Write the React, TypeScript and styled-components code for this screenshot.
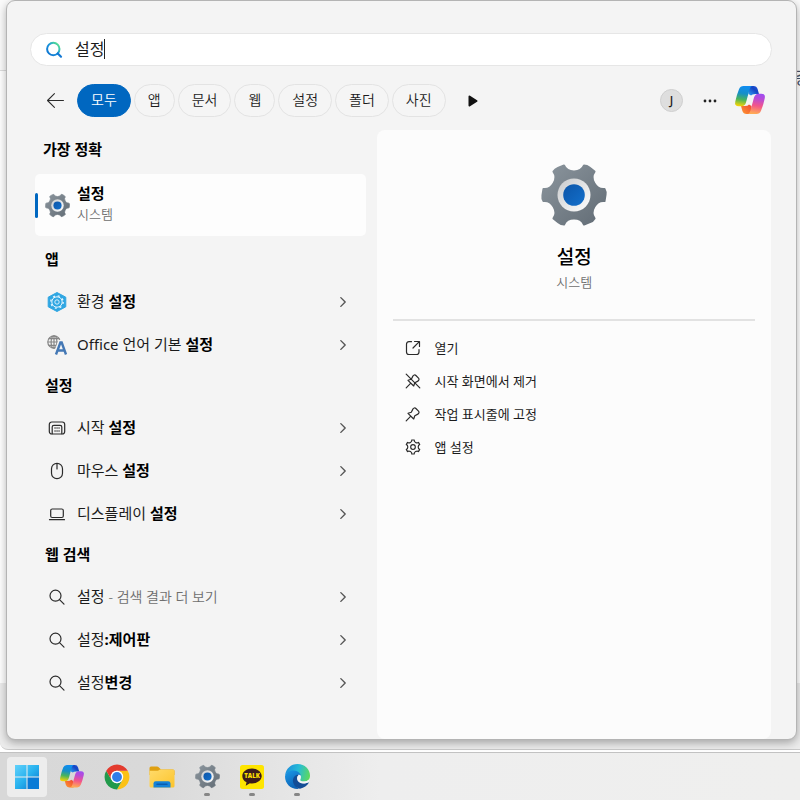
import React, { useId, useState } from "react";
import styled, { createGlobalStyle } from "styled-components";

const GlobalStyle = createGlobalStyle`
  * { box-sizing: border-box; }
  body { margin: 0; background: #ffffff; }
  body, button, input {
    font-family: "Noto Sans", "Noto Sans CJK KR", sans-serif;
    color: #1b1b1b;
  }
  button { border: 0; padding: 0; background: none; text-align: left; cursor: pointer; }
  svg { display: block; flex: none; overflow: visible; }
`;

const Desktop = styled.div`
  display: flex;
  flex-direction: column;
  min-height: 100vh;
  position: relative;
  overflow: hidden;
`;

const Backdrop = styled.div`
  position: absolute;
  inset: 0 0 50px;
  border-bottom: 1px solid #c9c9c9;
  border-radius: 0 0 0 8px;
  background: linear-gradient(#fafafa 0 70px, #dddddd 70px 71px, #ffffff 71px 683px, #ececec 683px);
`;

const BackdropText = styled.span`
  position: absolute;
  top: 68px;
  left: calc(100% - 5px);
  font-size: 16px;
  line-height: 20px;
  color: #44546a;
`;

const PanelArea = styled.div`
  flex: 1;
  display: flex;
  padding: 0 3px 12px 6px;
  position: relative;
`;

const Panel = styled.main`
  flex: 1;
  min-width: 0;
  display: flex;
  flex-direction: column;
  padding: 32px 24px 0 23px;
  border: 1px solid #b4b4b4;
  border-radius: 9px;
  background: #f4f4f4;
  box-shadow: 0 3px 9px rgba(0, 0, 0, 0.3);
`;

const SearchBox = styled.label`
  display: flex;
  align-items: center;
  height: 33px;
  padding: 0 16px 2px 15px;
  border: 1px solid #e6e6e6;
  border-radius: 17px;
  background: #ffffff;
`;

const SearchInput = styled.input`
  field-sizing: content;
  min-width: 2px;
  max-width: 90%;
  height: 24px;
  margin-left: 13px;
  padding: 0;
  border: 0;
  outline: 0;
  background: transparent;
  font-size: 16px;
  line-height: 24px;
  caret-color: transparent;
`;

const Caret = styled.span`
  width: 1px;
  height: 20px;
  background: #222222;
`;

const Nav = styled.nav`
  display: flex;
  align-items: center;
  gap: 3px;
  height: 33px;
  margin: 18px 0 13px;
  padding: 0 7px 0 17px;
`;

const IconButton = styled.button<{ $size?: number; $before?: number; $after?: number }>`
  display: flex;
  align-items: center;
  justify-content: center;
  flex: none;
  width: ${(p) => p.$size ?? 20}px;
  height: 32px;
  margin-left: ${(p) => p.$before ?? 0}px;
  margin-right: ${(p) => p.$after ?? 0}px;
`;

const Chip = styled.button<{ $active?: boolean }>`
  height: 33px;
  padding: 0 13px 2px;
  border: 1px solid ${(p) => (p.$active ? "#0067c0" : "#e3e3e3")};
  border-radius: 17px;
  background: ${(p) => (p.$active ? "#0067c0" : "#f5f5f5")};
  color: ${(p) => (p.$active ? "#ffffff" : "#1b1b1b")};
  font-size: 14px;
  font-weight: 350;
  line-height: 20px;
  white-space: nowrap;
`;

const Spacer = styled.div`
  flex: 1;
`;

const Avatar = styled.button`
  width: 23px;
  height: 23px;
  border: 1px solid #cfcfcf;
  border-radius: 50%;
  background: #dedede;
  font-size: 12px;
  font-weight: 500;
  line-height: 20px;
  text-align: center;
`;

const Body = styled.div`
  flex: 1;
  display: grid;
  grid-template-columns: minmax(0, 331fr) minmax(0, 393fr);
  gap: 11px;
  margin: 0 1px 0 5px;
`;

const Results = styled.div`
  padding-bottom: 32px;
`;

const Heading = styled.h2<{ $lead?: boolean }>`
  height: 40px;
  margin: 0;
  padding-left: ${(p) => (p.$lead ? 8 : 10)}px;
  font-size: 15px;
  font-weight: 700;
  line-height: 38px;
  color: #000000;
`;

const BestMatch = styled.button`
  display: flex;
  align-items: center;
  width: 100%;
  height: 62px;
  margin: 4px 0;
  border-radius: 5px;
  background: #fdfdfd;

  &::before {
    content: "";
    width: 3px;
    height: 25px;
    margin-right: 7px;
    border-radius: 2px;
    background: #0067c0;
  }
`;

const BestText = styled.span`
  display: flex;
  flex-direction: column;
  margin-left: 7px;
  padding-bottom: 3px;
`;

const Strong = styled.strong`
  font-size: 15px;
  font-weight: 700;
  line-height: 21px;
  color: #000000;
`;

const Muted = styled.span<{ $size?: number }>`
  font-size: ${(p) => p.$size ?? 13}px;
  font-weight: 350;
  line-height: 20px;
  color: #6e6e6e;
`;

const Row = styled.button`
  display: flex;
  align-items: center;
  width: 100%;
  height: 43px;
  padding: 0 16px 0 12px;
  font-size: 15px;
  line-height: 22px;
`;

const RowIcon = styled.span`
  display: flex;
  justify-content: center;
  width: 20px;
  margin-right: 10px;
`;

const RowText = styled.span`
  flex: 1;
  padding-bottom: 1px;
  white-space: pre;

  b { font-weight: 700; color: #000000; }
`;

const Preview = styled.section`
  display: flex;
  flex-direction: column;
  align-items: center;
  padding: 32px 16px;
  border-radius: 8px;
  background: #fcfcfc;
`;

const Title = styled.h1`
  margin: 14px 0 0;
  font-size: 19px;
  font-weight: 500;
  line-height: 30px;
  color: #000000;
`;

const Rule = styled.hr`
  width: 100%;
  height: 2px;
  margin: 27px 0 10px;
  border: 0;
  background: #e2e2e2;
`;

const Action = styled.button`
  display: flex;
  align-items: center;
  gap: 13px;
  width: 100%;
  height: 33px;
  padding-left: 12px;
  font-size: 13px;
  line-height: 20px;
`;

const Taskbar = styled.footer`
  display: flex;
  align-items: center;
  gap: 5px;
  height: 48px;
  padding: 0 7px;
  position: relative;
  border-top: 1px solid #c2c2c2;
  background: linear-gradient(90deg, #d8d8d8 0, #d9d9d9 150px, #eeeeee 380px, #efefee);
`;

const TaskButton = styled.button<{ $active?: boolean; $running?: boolean }>`
  display: grid;
  place-items: center;
  position: relative;
  width: 40px;
  height: 40px;
  border-radius: 4px;
  background: ${(p) => (p.$active ? "#ededed" : "transparent")};

  &::after {
    content: "";
    display: ${(p) => (p.$running ? "block" : "none")};
    position: absolute;
    bottom: 1px;
    left: 17px;
    width: 6px;
    height: 3px;
    border-radius: 2px;
    background: #868686;
  }
`;

/* ---------- icons ---------- */

const turn = (x: number, y: number, deg: number) => {
  const a = (deg * Math.PI) / 180;
  const px = x * Math.cos(a) - y * Math.sin(a);
  const py = x * Math.sin(a) + y * Math.cos(a);
  return `${px.toFixed(2)} ${py.toFixed(2)}`;
};

const gearPath =
  [0, 60, 120, 180, 240, 300]
    .map((d, i) => {
      const p = (x: number, y: number) => turn(x, y, d);
      return `${i ? "L" : "M"}${p(-10, -29.5)}Q${p(-7.5, -23.5)} ${p(0, -23.5)}Q${p(7.5, -23.5)} ${p(10, -29.5)}Q${p(13, -29.5)} ${p(15.5, -27.5)}`;
    })
    .join("") + "Z";

function SettingsGear({ size }: { size: number }) {
  const id = useId();
  return (
    <svg width={size} height={size} viewBox="-33 -33 66 66" aria-hidden="true">
      <defs>
        <linearGradient id={id + "a"} x1="0" y1="0" x2="1" y2="1">
          <stop offset="0" stopColor="#8b959d" />
          <stop offset="1" stopColor="#626c75" />
        </linearGradient>
        <linearGradient id={id + "b"} x1="0" y1="0" x2="1" y2="1">
          <stop offset="0" stopColor="#c8cacc" />
          <stop offset="1" stopColor="#ffffff" />
        </linearGradient>
        <linearGradient id={id + "c"} x1="0" y1="0" x2="1" y2="1">
          <stop offset="0" stopColor="#0c55a8" />
          <stop offset="1" stopColor="#1370cc" />
        </linearGradient>
      </defs>
      <path d={gearPath} fill={`url(#${id}a)`} stroke={`url(#${id}a)`} strokeWidth="2" strokeLinejoin="round" />
      <circle r="16.5" fill={`url(#${id}b)`} />
      <circle r="10.8" fill={`url(#${id}c)`} />
    </svg>
  );
}

function Copilot({ size }: { size: number }) {
  const id = useId();
  const ribbon = "M8.5 0H17Q15.4 .6 14.6 3.2L11 16.5Q9.8 20.3 6.5 20.3H3.8Q-.8 20.3 .3 15.5Q1.8 8.5 4 3.2Q5.3 0 8.5 0Z";
  const fold = "M13 0H18.6Q21.6 0 22.6 3L24 8H20.5Q17 8 16 9.5L13.5 8Z";
  return (
    <svg width={size} height={size} viewBox="0 0 30 30" aria-hidden="true">
      <defs>
        <linearGradient id={id + "a"} x1=".4" y1="0" x2=".25" y2="1">
          <stop offset="0" stopColor="#0f8df0" />
          <stop offset=".35" stopColor="#168fc8" />
          <stop offset=".65" stopColor="#49b45c" />
          <stop offset="1" stopColor="#ffd500" />
        </linearGradient>
        <linearGradient id={id + "b"} x1=".35" y1="1" x2=".5" y2="0">
          <stop offset="0" stopColor="#9f4df0" />
          <stop offset=".25" stopColor="#b94bd6" />
          <stop offset=".6" stopColor="#f3568a" />
          <stop offset="1" stopColor="#ffab55" />
        </linearGradient>
        <linearGradient id={id + "c"} x1="0" y1="1" x2="1" y2="0">
          <stop offset="0" stopColor="#2fa5f5" />
          <stop offset=".6" stopColor="#1545c4" />
          <stop offset="1" stopColor="#2458dc" />
        </linearGradient>
        <linearGradient id={id + "d"} x1="1" y1="0" x2="0" y2="1">
          <stop offset="0" stopColor="#ff9a2e" />
          <stop offset="1" stopColor="#ef4436" />
        </linearGradient>
      </defs>
      <path d={fold} fill={`url(#${id}c)`} />
      <g transform="rotate(180 15 14)">
        <path d={fold} fill={`url(#${id}d)`} />
        <path d={ribbon} fill={`url(#${id}b)`} />
      </g>
      <path d={ribbon} fill={`url(#${id}a)`} />
    </svg>
  );
}

function Chrome() {
  const wedge = "M24 13H43.05A22 22 0 0 0 4.95 13L14.47 29.5A11 11 0 0 1 24 13Z";
  return (
    <svg width="26" height="26" viewBox="1 1 46 46" aria-hidden="true">
      <path d={wedge} fill="#fbc116" transform="rotate(120 24 24)" />
      <path d={wedge} fill="#229a4b" transform="rotate(-120 24 24)" />
      <path d={wedge} fill="#e33b2e" />
      <circle cx="24" cy="24" r="11" fill="#ffffff" />
      <circle cx="24" cy="24" r="8.7" fill="#2f7de9" />
    </svg>
  );
}

function Folder() {
  return (
    <svg width="26" height="24" viewBox="0 0 26 24" aria-hidden="true">
      <defs>
        <linearGradient id="folderFront" x1="0" y1="0" x2="1" y2="1">
          <stop offset="0" stopColor="#ffdb6b" />
          <stop offset="1" stopColor="#fcc42c" />
        </linearGradient>
      </defs>
      <path d="M.5 3Q.5 1.5 2 1.5H8Q9 1.5 9.7 2.2L12 4.5H24Q25.5 4.5 25.5 6V10H.5Z" fill="#dfa011" />
      <path d="M.5 5.8H8.5Q9.5 5.8 10.2 5.1L11 4.5H24Q25.5 4.5 25.5 6V21Q25.5 22.5 24 22.5H2Q.5 22.5 .5 21Z" fill="url(#folderFront)" />
      <path d="M4.5 22.5V18.5Q4.5 16.3 6.7 16.3H19.3Q21.5 16.3 21.5 18.5V22.5Z" fill="#1683d8" />
      <path d="M8 19.2H18" stroke="#0b5cae" strokeWidth="1.5" strokeLinecap="round" />
    </svg>
  );
}

const TalkText = styled.text`
  font: 900 6px "Open Sans", sans-serif;
  fill: #ffe000;
`;

function KakaoTalk() {
  return (
    <svg width="24" height="24" viewBox="0 0 24 24" aria-hidden="true">
      <rect width="24" height="24" rx="2.5" fill="#fee500" />
      <path d="M12 3.5C6.5 3.5 2.3 6.9 2.3 11C2.3 13.7 4 16 6.5 17.3L5.7 20.7L9.9 18.2Q11 18.4 12 18.4C17.5 18.4 21.7 15.1 21.7 11C21.7 6.9 17.5 3.5 12 3.5Z" fill="#3b1c1c" />
      <TalkText x="12" y="13" textAnchor="middle">TALK</TalkText>
    </svg>
  );
}

function Edge() {
  return (
    <svg width="25" height="25" viewBox="0 0 25 25" aria-hidden="true">
      <defs>
        <linearGradient id="edgeTop" x1="0" y1=".4" x2="1" y2=".6">
          <stop offset="0" stopColor="#1c8fdc" />
          <stop offset=".5" stopColor="#27bcd6" />
          <stop offset="1" stopColor="#5ed95c" />
        </linearGradient>
        <linearGradient id="edgeBody" x1="0" y1="0" x2=".5" y2="1">
          <stop offset="0" stopColor="#1b9ae8" />
          <stop offset="1" stopColor="#0d61b4" />
        </linearGradient>
      </defs>
      <path d="M.1 11.5C.8 4.5 6 0 12.5 0C20 0 25 5.5 25 11.5C25 15.5 22.5 17.5 19 17.5C16 17.5 14.5 16.6 15.3 15.2C17.5 11.5 13 6.5 8 7.2C4 7.5 1.2 9.5 .1 11.5Z" fill="url(#edgeTop)" />
      <path d="M0 12.5C.4 8.6 4.5 6.3 8.5 6.4C13 6.5 16.2 9.8 16 12.2C14.5 9.8 11.5 10.5 10.3 13.5C9 18 11 24 14 24.9Q13.2 25 12.5 25C5.5 25 0 19.5 0 12.5Z" fill="url(#edgeBody)" />
      <path d="M12.2 10.8C8.5 12.2 7 15.7 8.5 19.5C9.8 22.7 12.5 24.7 15 24.7C19 24 22.3 21.5 23.8 18.8C24 18.3 23.6 18.2 23 18.5C18 20.8 12.5 19 12.2 14.8C12.1 13 12.7 11.8 13.5 11.2Z" fill="#134d96" />
      <path d="M12.2 14.8C12 12 13.6 10.8 15.6 11.6Q16.2 13.2 15.3 15.2C14.5 16.6 16 17.5 19 17.5Q22 17.5 24 15.8Q24.400 17 23.800 18.300Q21 19.800 18 19.300C14.500 19 12.400 17.200 12.200 14.800Z" fill="#f2f5f7" />
    </svg>
  );
}

function WindowsLogo() {
  return (
    <svg width="24" height="24" viewBox="0 0 24 24" aria-hidden="true">
      <defs>
        <linearGradient id="winPane" gradientUnits="userSpaceOnUse" x1="0" y1="0" x2="24" y2="24">
          <stop offset="0" stopColor="#62d2fb" />
          <stop offset=".5" stopColor="#27b1ee" />
          <stop offset="1" stopColor="#0670cc" />
        </linearGradient>
      </defs>
      <path d="M0 0H11.5V11.5H0ZM12.5 0H24V11.5H12.5ZM0 12.5H11.5V24H0Z" fill="url(#winPane)" />
      <path d="M12.5 12.5H24V24H12.5Z" fill="#0a7bd6" />
    </svg>
  );
}

function HexGear() {
  return (
    <svg width="20" height="20" viewBox="0 0 20 20" aria-hidden="true">
      <path d="M10 .5L18.8 5.2V14.8L10 19.5L1.2 14.8V5.2Z" fill="#2fa6e2" stroke="#2fa6e2" strokeLinejoin="round" />
      <g fill="none" stroke="#e6f6ff">
        <circle cx="10" cy="10" r="5.2" strokeWidth="1" />
        <circle cx="10" cy="10" r="6.2" strokeWidth="1.3" strokeDasharray="2 2.87" />
        <circle cx="10" cy="10" r="2.2" strokeWidth=".9" />
      </g>
    </svg>
  );
}

function OfficeLanguage() {
  return (
    <svg width="20" height="20" viewBox="0 0 20 20" aria-hidden="true">
      <g fill="none" stroke="#858585" strokeWidth="1.2">
        <circle cx="7" cy="7" r="6.2" />
        <ellipse cx="7" cy="7" rx="2.9" ry="6.2" />
        <path d="M7 .8V13.2M.8 7H13.2M1.7 3.7H12.3M1.7 10.3H12.3" />
      </g>
      <path d="M8.3 19.5L12.8 7H15.2L19.5 19.5M10.3 15.5H17.8" fill="none" stroke="#f4f4f4" strokeWidth="4" />
      <path d="M9 19.5L13.4 7.5H14.7L19 19.5M10.8 15.5H17.3" fill="none" stroke="#4478b5" strokeWidth="2.4" />
    </svg>
  );
}

type LineName = "start" | "mouse" | "display" | "search" | "open" | "unpin" | "pin" | "gear" | "chevron" | "back";

const pin = "M7.9 3.1C8.5 1.9 10 1.6 10.9 2.5L13.5 5.1C14.4 6 14.1 7.5 12.9 8.1L9.8 9.7L8.7 13L3 7.3L6.3 6.2ZM5.8 10.2L1.2 14.8";

const smallGear =
  [30, 90, 150, 210, 270, 330]
    .map((d, i) => {
      const p = (x: number, y: number) => turn(x, y, d);
      return `${i ? "L" : "M"}${p(-2.4, -6.7)}Q${p(-2, -5.2)} ${p(0, -5.2)}Q${p(2, -5.2)} ${p(2.4, -6.7)}`;
    })
    .join("") + "Z";

function LineIcon({ name, size = 16 }: { name: LineName; size?: number }) {
  return (
    <svg width={size} height={size} viewBox="0 0 16 16" fill="none" stroke="#2b2b2b" strokeWidth="1.2" strokeLinecap="round" strokeLinejoin="round" aria-hidden="true">
      {name === "start" && (
        <>
          <rect x=".3" y="2" width="15.4" height="12" rx="2.5" />
          <path d="M3.2 13.7V7Q3.2 5.3 4.9 5.3H11.1Q12.8 5.3 12.8 7V13.7" />
          <path d="M6 8H6.1M8 8H8.1M10 8H10.1M6 11H6.1M8 11H8.1M10 11H10.1" strokeWidth="1.4" />
        </>
      )}
      {name === "mouse" && (
        <>
          <rect x="2.5" y=".3" width="11" height="15.4" rx="5.5" />
          <path d="M8 .5V6" />
        </>
      )}
      {name === "display" && (
        <>
          <rect x="1.7" y="3" width="12.6" height="8.5" rx="1.5" />
          <path d="M.5 13.7H15.5" />
        </>
      )}
      {name === "search" && (
        <>
          <circle cx="6.5" cy="6.7" r="5.5" />
          <path d="M10.5 10.7L15 15.2" />
        </>
      )}
      {name === "open" && (
        <>
          <path d="M6.5 1.7H4Q1.5 1.7 1.5 4.2V12Q1.5 14.5 4 14.5H11.5Q14 14.5 14 12V9.5" />
          <path d="M9.5 1.5H14.5V6.5M14.3 1.7L8 8" />
        </>
      )}
      {name === "pin" && <path d={pin} />}
      {name === "unpin" && (
        <>
          <path d={pin} />
          <path d="M1.2 1.2L14.8 14.8" />
        </>
      )}
      {name === "gear" && (
        <g transform="translate(8 8)">
          <path d={smallGear} />
          <circle r="2.3" />
        </g>
      )}
      {name === "chevron" && <path d="M5.5 3L10.5 8L5.5 13" strokeWidth="1.6" stroke="#555555" />}
      {name === "back" && <path d="M15.5 8H.5M7 1.5L.5 8L7 14.5" strokeWidth="1" />}
    </svg>
  );
}

function BingSearch() {
  return (
    <svg width="16" height="16" viewBox="0 0 16 16" fill="none" aria-hidden="true">
      <defs>
        <linearGradient id="lens" x1="0" y1="1" x2="1" y2="0">
          <stop offset="0" stopColor="#0a6fd0" />
          <stop offset=".5" stopColor="#1a93dc" />
          <stop offset=".85" stopColor="#4fd898" />
        </linearGradient>
      </defs>
      <circle cx="7.3" cy="8" r="6.2" stroke="url(#lens)" strokeWidth="2" />
      <path d="M11.8 12.5L15 15.7" stroke="#1277d4" strokeWidth="2.2" strokeLinecap="round" />
    </svg>
  );
}

/* ---------- content ---------- */

const filters = ["모두", "앱", "문서", "웹", "설정", "폴더", "사진"];

type Item = { icon: React.ReactNode; text: React.ReactNode };

const groups: { title: string; items: Item[] }[] = [
  {
    title: "앱",
    items: [
      { icon: <HexGear />, text: <>환경 <b>설정</b></> },
      { icon: <OfficeLanguage />, text: <>Office 언어 기본 <b>설정</b></> },
    ],
  },
  {
    title: "설정",
    items: [
      { icon: <LineIcon name="start" />, text: <>시작 <b>설정</b></> },
      { icon: <LineIcon name="mouse" />, text: <>마우스 <b>설정</b></> },
      { icon: <LineIcon name="display" />, text: <>디스플레이 <b>설정</b></> },
    ],
  },
  {
    title: "웹 검색",
    items: [
      { icon: <LineIcon name="search" />, text: <>설정 <Muted $size={14}>- 검색 결과 더 보기</Muted></> },
      { icon: <LineIcon name="search" />, text: <>설정<b>:제어판</b></> },
      { icon: <LineIcon name="search" />, text: <>설정<b>변경</b></> },
    ],
  },
];

const actions: { icon: LineName; label: string }[] = [
  { icon: "open", label: "열기" },
  { icon: "unpin", label: "시작 화면에서 제거" },
  { icon: "pin", label: "작업 표시줄에 고정" },
  { icon: "gear", label: "앱 설정" },
];

const tasks: { name: string; icon: React.ReactNode; active?: boolean; running?: boolean }[] = [
  { name: "시작", icon: <WindowsLogo />, active: true },
  { name: "Copilot", icon: <Copilot size={24} /> },
  { name: "Chrome", icon: <Chrome /> },
  { name: "파일 탐색기", icon: <Folder /> },
  { name: "설정", icon: <SettingsGear size={25} />, running: true },
  { name: "카카오톡", icon: <KakaoTalk />, running: true },
  { name: "Edge", icon: <Edge />, running: true },
];

export default function App() {
  const [query, setQuery] = useState("설정");
  const [filter, setFilter] = useState("모두");
  return (
    <Desktop>
      <GlobalStyle />
      <Backdrop>
        <BackdropText>증</BackdropText>
      </Backdrop>
      <PanelArea>
        <Panel>
          <SearchBox>
            <BingSearch />
            <SearchInput aria-label="검색" value={query} onChange={(e) => setQuery(e.target.value)} />
            <Caret />
          </SearchBox>
          <Nav>
            <IconButton aria-label="뒤로" $size={17} $after={10}>
              <LineIcon name="back" size={17} />
            </IconButton>
            {filters.map((f) => (
              <Chip key={f} $active={f === filter} onClick={() => setFilter(f)}>{f}</Chip>
            ))}
            <IconButton aria-label="다음 필터" $before={14}>
              <svg width="10" height="12" viewBox="0 0 10 12" aria-hidden="true">
                <path d="M1.5 1.5L8.5 6L1.5 10.5Z" fill="#111111" stroke="#111111" strokeWidth="2" strokeLinejoin="round" />
              </svg>
            </IconButton>
            <Spacer />
            <Avatar aria-label="계정">J</Avatar>
            <IconButton aria-label="옵션" $before={14} $after={12}>
              <svg width="14" height="4" viewBox="0 0 14 4" fill="#222222" aria-hidden="true">
                <circle cx="2" cy="2" r="1.4" />
                <circle cx="7" cy="2" r="1.4" />
                <circle cx="12" cy="2" r="1.4" />
              </svg>
            </IconButton>
            <IconButton aria-label="Copilot" $size={30}>
              <Copilot size={30} />
            </IconButton>
          </Nav>
          <Body>
            <Results>
              <Heading $lead>가장 정확</Heading>
              <BestMatch>
                <SettingsGear size={25} />
                <BestText>
                  <Strong>설정</Strong>
                  <Muted>시스템</Muted>
                </BestText>
              </BestMatch>
              {groups.map((g) => (
                <section key={g.title}>
                  <Heading>{g.title}</Heading>
                  {g.items.map((item, i) => (
                    <Row key={i}>
                      <RowIcon>{item.icon}</RowIcon>
                      <RowText>{item.text}</RowText>
                      <LineIcon name="chevron" size={14} />
                    </Row>
                  ))}
                </section>
              ))}
            </Results>
            <Preview>
              <SettingsGear size={66} />
              <Title>설정</Title>
              <Muted>시스템</Muted>
              <Rule />
              {actions.map((a) => (
                <Action key={a.label}>
                  <LineIcon name={a.icon} />
                  {a.label}
                </Action>
              ))}
            </Preview>
          </Body>
        </Panel>
      </PanelArea>
      <Taskbar>
        {tasks.map((t) => (
          <TaskButton key={t.name} aria-label={t.name} $active={t.active} $running={t.running}>
            {t.icon}
          </TaskButton>
        ))}
      </Taskbar>
    </Desktop>
  );
}
